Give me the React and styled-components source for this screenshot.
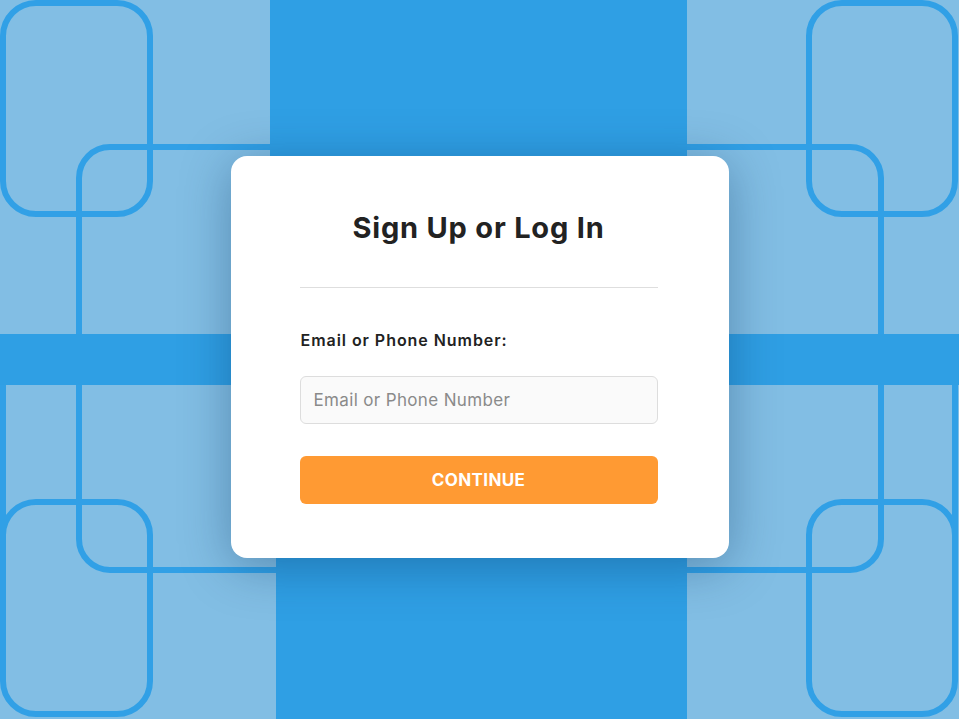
import React from "react";
import styled, { createGlobalStyle } from "styled-components";

const GlobalStyle = createGlobalStyle`
  html, body {
    margin: 0;
    padding: 0;
    overflow: hidden;
  }
  body {
    font-family: "Inter", "Noto Sans", sans-serif;
  }
  * {
    box-sizing: border-box;
  }
`;

const Page = styled.div`
  position: relative;
  width: 100vw;
  height: 100vh;
  display: flex;
  align-items: center;
  justify-content: center;
  padding-bottom: 5px;
  background-color: #82bee4;
  overflow: hidden;
`;

const Backdrop = styled.svg`
  position: absolute;
  top: 0;
  left: 0;
  width: 959px;
  height: 719px;
`;

const Card = styled.form`
  position: relative;
  width: 498px;
  padding: 55px 71px 54px 69px;
  display: flex;
  flex-direction: column;
  background: #ffffff;
  border-radius: 16px;
  box-shadow: 0 8px 50px rgba(0, 40, 80, 0.35);
`;

const Title = styled.h1`
  margin: 0;
  font-size: 29px;
  line-height: 34px;
  font-weight: 700;
  letter-spacing: 0.8px;
  text-align: center;
  color: #222222;
`;

const Divider = styled.hr`
  margin: 42px 0 0;
  border: none;
  height: 1px;
  background: #dedede;
`;

const Label = styled.label`
  margin-top: 42px;
  padding-left: 1px;
  font-size: 16px;
  line-height: 20px;
  font-weight: 600;
  letter-spacing: 0.95px;
  color: #222222;
`;

const Input = styled.input`
  margin-top: 26px;
  height: 48px;
  padding: 0 13px;
  border: 1px solid #dddddd;
  border-radius: 6px;
  background: #fafafa;
  font-family: inherit;
  font-size: 17px;
  letter-spacing: 0.35px;
  color: #333333;
  outline: none;

  &::placeholder {
    color: #8a8a8a;
  }
`;

const Button = styled.button`
  margin-top: 32px;
  height: 48px;
  border: none;
  border-radius: 6px;
  background: #ff9a33;
  color: #ffffff;
  font-family: inherit;
  font-size: 17px;
  font-weight: 700;
  letter-spacing: 0.4px;
  cursor: pointer;
`;

const STROKE = "#31a0e6";

const Pattern = () => (
  <Backdrop viewBox="0 0 959 719" aria-hidden="true">
    <rect x="0" y="0" width="959" height="719" fill="#82bee4" />
    <rect x="270" y="0" width="417" height="340" fill="#2f9fe4" />
    <rect x="276" y="380" width="411" height="339" fill="#2f9fe4" />
    <rect x="0" y="334" width="959" height="51" fill="#2f9fe4" />
    <g fill="none" stroke={STROKE} strokeWidth="6">
      <rect x="3" y="3" width="147" height="211" rx="33" />
      <rect x="809" y="3" width="146" height="211" rx="33" />
      <rect x="3" y="502" width="147" height="212" rx="33" />
      <rect x="809" y="502" width="146" height="212" rx="33" />
      <path d="M270 147 H110 A31 31 0 0 0 79 178 V334" />
      <path d="M79 385 V539 A31 31 0 0 0 110 570 H276" />
      <path d="M687 147 H850 A31 31 0 0 1 881 178 V334" />
      <path d="M881 385 V539 A31 31 0 0 1 850 570 H687" />
      <path d="M3 385 V540" />
      <path d="M955 385 V540" />
    </g>
  </Backdrop>
);

const App = () => {
  return (
    <>
      <GlobalStyle />
      <Page>
        <Pattern />
        <Card onSubmit={(e) => e.preventDefault()}>
          <Title>Sign Up or Log In</Title>
          <Divider />
          <Label htmlFor="login">Email or Phone Number:</Label>
          <Input id="login" type="text" placeholder="Email or Phone Number" />
          <Button type="submit">CONTINUE</Button>
        </Card>
      </Page>
    </>
  );
};

export default App;
